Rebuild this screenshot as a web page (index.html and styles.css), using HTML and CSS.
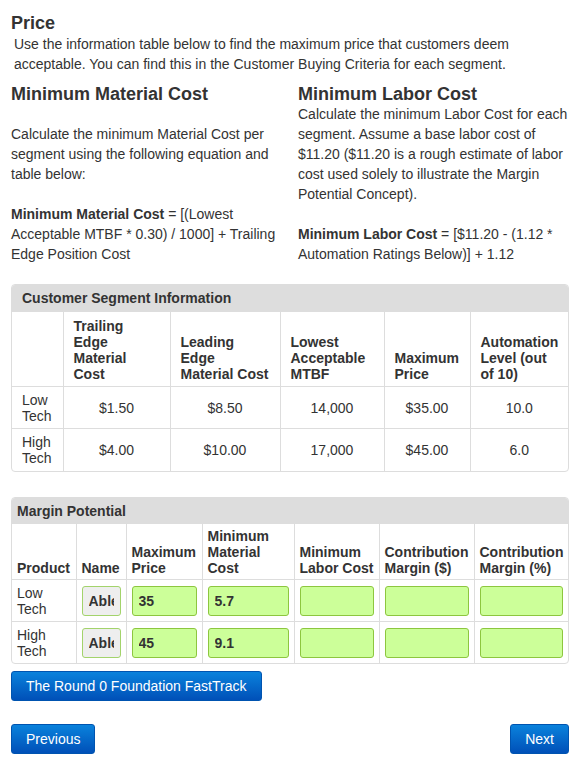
FILE: index.html
```html
<!DOCTYPE html>
<html lang="en">
<head>
  <meta charset="UTF-8" />
  <title>Price</title>
  <link rel="stylesheet" href="styles.css">
</head>
<body>

  <h2 class="title">Price</h2>
  <p class="intro">Use the information table below to find the maximum price that customers deem acceptable. You can find this in the Customer Buying Criteria for each segment.</p>

  <div class="cols">
    <div class="col">
      <h3>Minimum Material Cost</h3>
      <p><br>Calculate the minimum Material Cost per segment using the following equation and table below:</p>
      <p class="formula"><b>Minimum Material Cost</b> = [(Lowest Acceptable MTBF * 0.30) / 1000] + Trailing Edge Position Cost</p>
    </div>
    <div class="col">
      <h3>Minimum Labor Cost</h3>
      <p>Calculate the minimum Labor Cost for each segment. Assume a base labor cost of $11.20 ($11.20 is a rough estimate of labor cost used solely to illustrate the Margin Potential Concept).</p>
      <p class="formula"><b>Minimum Labor Cost</b> = [$11.20 - (1.12 * Automation Ratings Below)] + 1.12</p>
    </div>
  </div>

  <!-- Customer Segment Information -->
  <div class="panel segment">
    <div class="panel-head">Customer Segment Information</div>
    <table>
      <colgroup>
        <col style="width:51px"><col style="width:107px"><col style="width:110px">
        <col style="width:104px"><col style="width:86px"><col>
      </colgroup>
      <tr>
        <th></th>
        <th>Trailing Edge Material Cost</th>
        <th>Leading Edge Material Cost</th>
        <th>Lowest Acceptable MTBF</th>
        <th>Maximum Price</th>
        <th>Automation Level (out of 10)</th>
      </tr>
      <tr>
        <td class="label">Low Tech</td>
        <td>$1.50</td><td>$8.50</td><td>14,000</td><td>$35.00</td><td>10.0</td>
      </tr>
      <tr>
        <td class="label">High Tech</td>
        <td>$4.00</td><td>$10.00</td><td>17,000</td><td>$45.00</td><td>6.0</td>
      </tr>
    </table>
  </div>

  <!-- Margin Potential -->
  <div class="panel margin">
    <div class="panel-head">Margin Potential</div>
    <table>
      <colgroup>
        <col style="width:64px"><col style="width:50px"><col style="width:76px">
        <col style="width:92px"><col style="width:85px"><col style="width:95px"><col>
      </colgroup>
      <tr>
        <th>Product</th>
        <th>Name</th>
        <th>Maximum Price</th>
        <th>Minimum Material Cost</th>
        <th>Minimum Labor Cost</th>
        <th>Contribution Margin ($)</th>
        <th>Contribution Margin (%)</th>
      </tr>
      <tr>
        <td>Low Tech</td>
        <td><input class="name" type="text" value="Able" readonly></td>
        <td><input type="text" value="35"></td>
        <td><input type="text" value="5.7"></td>
        <td><input type="text"></td>
        <td><input type="text"></td>
        <td><input type="text"></td>
      </tr>
      <tr>
        <td>High Tech</td>
        <td><input class="name" type="text" value="Able" readonly></td>
        <td><input type="text" value="45"></td>
        <td><input type="text" value="9.1"></td>
        <td><input type="text"></td>
        <td><input type="text"></td>
        <td><input type="text"></td>
      </tr>
    </table>
  </div>

  <div class="actions">
    <button class="btn">The Round 0 Foundation FastTrack</button>
  </div>

  <div class="nav">
    <button class="btn">Previous</button>
    <button class="btn">Next</button>
  </div>

</body>
</html>
```

FILE: styles.css
```css
body {
  font-family: "Liberation Sans", Arial, sans-serif; font-size: 14px;
  line-height: 20px; color: #333; margin: 0; padding: 0 16px 0 11px;
  background: #fff;
}
.title { font-size: 18px; line-height: 20px; margin: 13px 0 0; }
.intro { margin: 1px 0 0 3px; }
p { margin: 0; }
.cols {
  display: grid; grid-template-columns: 274px 1fr; gap: 13px;
  margin-top: 10px;
}
.col h3 { font-size: 18px; line-height: 20px; margin: 0; }
.formula { margin-top: 20px; }

.panel {
  border: 1px solid #ddd; border-radius: 4px; overflow: hidden;
  margin-top: 20px;
}
.panel-head {
  background: #ddd; font-weight: bold; height: 26px; line-height: 26px;
  padding: 0 10px;
}
table {
  width: 100%; border-collapse: collapse; table-layout: fixed;
  line-height: 16px;
}
th, td { border: 1px solid #ddd; }
tr:first-child th { border-top: none; }
tr th:first-child, tr td:first-child { border-left: none; }
tr th:last-child, tr td:last-child { border-right: none; }
tr:last-child td { border-bottom: none; }
th { text-align: left; vertical-align: bottom; }

.segment .panel-head { height: 27px; line-height: 27px; }
.segment th { padding: 6px 10px 4px; }
.segment td { padding: 5px 10px 4px; text-align: center; }
.segment tr:last-child td { padding-bottom: 5px; }
.segment td.label { text-align: left; }

.margin { margin-top: 25px; }
.margin .panel-head { padding: 0 5px; }
.margin th { padding: 4px 5px 3px; }
.margin td { padding: 5px 5px 4px; }
.margin input {
  width: 100%; box-sizing: border-box; height: 30px; padding: 0 6px;
  border: 1px solid #8dc63f; border-radius: 3px; background: #ccff99;
  font-family: inherit; font-size: 14px; font-weight: bold; color: #333;
  display: block;
}
.margin input.name { background: #eee; border-color: #a3d36b; }

.btn {
  font-family: inherit; font-size: 14px; color: #fff; height: 30px;
  padding: 0 14px; border: 1px solid #0054b0; border-radius: 3px;
  background: linear-gradient(#0a82dc, #0050b8); cursor: pointer;
}
.actions { display: flex; margin-top: 7px; }
.nav { display: flex; justify-content: space-between; margin-top: 23px; }
```
